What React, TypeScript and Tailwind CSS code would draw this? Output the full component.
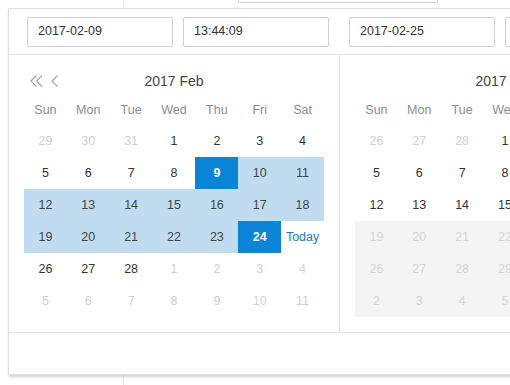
import React from "react";

type Cell = { d: number; kind: "other" | "normal" | "range" | "sel" | "today" | "disabled" };

const font = { fontFamily: '"Liberation Sans", Arial, sans-serif' };

const weekDays = ["Sun", "Mon", "Tue", "Wed", "Thu", "Fri", "Sat"];

function febCells(): Cell[] {
  const out: Cell[] = [];
  [29, 30, 31].forEach((d) => out.push({ d, kind: "other" }));
  for (let d = 1; d <= 28; d++) {
    let kind: Cell["kind"] = "normal";
    if (d === 9 || d === 24) kind = "sel";
    else if (d > 9 && d < 24) kind = "range";
    else if (d === 25) kind = "today";
    out.push({ d, kind });
  }
  for (let d = 1; d <= 11; d++) out.push({ d, kind: "other" });
  return out;
}

function marCells(): Cell[] {
  const out: Cell[] = [];
  [26, 27, 28].forEach((d) => out.push({ d, kind: "other" }));
  for (let d = 1; d <= 31; d++) {
    out.push({ d, kind: d >= 19 ? "disabled" : "normal" });
  }
  for (let d = 1; d <= 8; d++) out.push({ d, kind: "disabled" });
  return out;
}

function DayCell({ c }: { c: Cell }) {
  const base = "h-[32px] flex items-center justify-center pt-[1px]";
  if (c.kind === "sel") return <div className={`${base} bg-[#0a84d6] text-white font-bold`}>{c.d}</div>;
  if (c.kind === "range") return <div className={`${base} bg-[#c0dcf0] text-[#444]`}>{c.d}</div>;
  if (c.kind === "today") return <div className={`${base} text-[#1f78c4]`}>Today</div>;
  if (c.kind === "disabled") return <div className={`${base} bg-[#f4f4f4] text-[#d4d4d4]`}>{c.d}</div>;
  if (c.kind === "other") return <div className={`${base} text-[#cfcfcf]`}>{c.d}</div>;
  return <div className={`${base} text-[#333]`}>{c.d}</div>;
}

function Chevrons() {
  return (
    <div className="flex items-center gap-[8px] pl-[6px] pt-[2px] text-[#a3a9b5]">
      <svg width="13" height="12" viewBox="0 0 13 12" fill="none" stroke="currentColor" strokeWidth="1.3">
        <path d="M6.5 0.5 L1 6 L6.5 11.5" />
        <path d="M12 0.5 L6.5 6 L12 11.5" />
      </svg>
      <svg width="8" height="12" viewBox="0 0 8 12" fill="none" stroke="currentColor" strokeWidth="1.3">
        <path d="M6.5 0.5 L1 6 L6.5 11.5" />
      </svg>
    </div>
  );
}

function Month({ title, cells, left }: { title: string; cells: Cell[]; left: boolean }) {
  return (
    <div className="w-[330px] shrink-0 px-[15px] pt-[11px]">
      <div className="grid grid-cols-[1fr_auto_1fr] items-center h-[28px]">
        <div>{left ? <Chevrons /> : null}</div>
        <div className="text-[14px] text-[#444] pt-[3px]">{title}</div>
        <div />
      </div>
      <div className="grid grid-cols-7 h-[31px] items-center text-[#8c8c8c] text-center pt-[2px]">
        {weekDays.map((w) => (
          <div key={w}>{w}</div>
        ))}
      </div>
      <div className="grid grid-cols-7 text-center">
        {cells.map((c, i) => (
          <DayCell key={i} c={c} />
        ))}
      </div>
    </div>
  );
}

function Input({ value }: { value: string }) {
  return (
    <div className="w-[146px] h-[30px] border border-[#cdd0d4] rounded-[2px] flex items-center px-[10px] text-[#333] text-[12.5px]">
      {value}
    </div>
  );
}

export default function App() {
  return (
    <div className="relative w-[510px] h-[385px] bg-white overflow-hidden text-[12.5px]" style={font}>
      {/* background page content */}
      <div className="flex h-full">
        <div className="w-[124px] shrink-0 border-r border-[#e6e6e6]" />
        <div className="pl-[114px]">
          <div className="w-[200px] h-[3px] border border-t-0 border-[#cfd2d6] rounded-b-[2px]" />
        </div>
      </div>

      {/* popup panel */}
      <div className="absolute left-[8px] top-[8px] w-[700px] h-[367px] bg-white border border-[#dcdfe3] shadow-[1px_2px_3px_rgba(0,0,0,0.18)] flex flex-col">
        <div className="h-[46px] border-b border-[#e1e3e6] flex items-center">
          <div className="w-[331px] shrink-0 flex gap-[10px] pl-[18px]">
            <Input value="2017-02-09" />
            <Input value="13:44:09" />
          </div>
          <div className="flex gap-[10px] pl-[9px]">
            <Input value="2017-02-25" />
            <Input value="" />
          </div>
        </div>
        <div className="flex h-[278px] border-b border-[#e1e3e6]">
          <Month title="2017 Feb" cells={febCells()} left />
          <div className="w-px bg-[#e1e3e6]" />
          <Month title="2017 Mar" cells={marCells()} left={false} />
        </div>
        <div className="flex-1" />
      </div>
    </div>
  );
}
